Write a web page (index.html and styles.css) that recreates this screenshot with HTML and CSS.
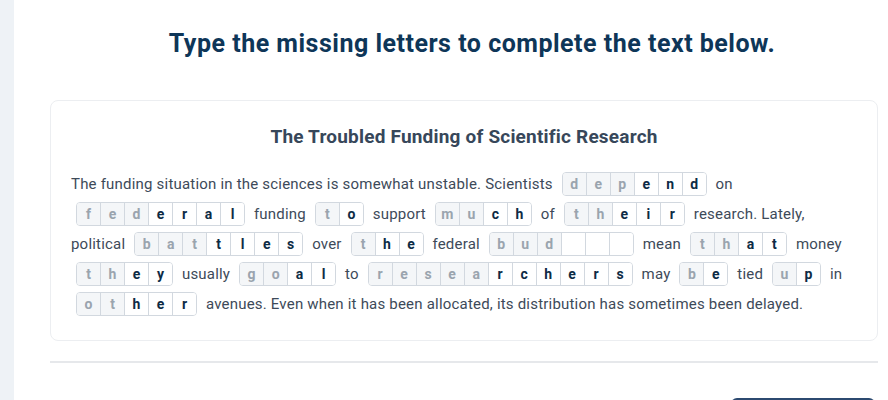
FILE: index.html
```html
<!DOCTYPE html>
<html lang="en">
<head>
    <meta charset="UTF-8">
    <title>Complete the text</title>
    <link rel="stylesheet" href="styles.css">
</head>
<body>
    <div class="layout">
        <aside class="sidebar"></aside>

        <main class="main">
            <h1 class="instructions">Type the missing letters to complete the text below.</h1>

            <section class="card">
                <h2 class="card-title">The Troubled Funding of Scientific Research</h2>
                <p class="passage" id="passage">
                    The funding situation in the sciences is somewhat unstable. Scientists
                    <span class="gap" data-given="dep" data-typed="end"></span> on
                    <span class="gap" data-given="fed" data-typed="eral"></span> funding
                    <span class="gap" data-given="t" data-typed="o"></span> support
                    <span class="gap" data-given="mu" data-typed="ch"></span> of
                    <span class="gap" data-given="th" data-typed="eir"></span> research. Lately,
                    political
                    <span class="gap" data-given="bat" data-typed="tles"></span> over
                    <span class="gap" data-given="t" data-typed="he"></span> federal
                    <span class="gap" data-given="bud" data-typed="   "></span> mean
                    <span class="gap" data-given="th" data-typed="at"></span> money
                    <span class="gap" data-given="th" data-typed="ey"></span> usually
                    <span class="gap" data-given="go" data-typed="al"></span> to
                    <span class="gap" data-given="resea" data-typed="rchers"></span> may
                    <span class="gap" data-given="b" data-typed="e"></span> tied
                    <span class="gap" data-given="u" data-typed="p"></span> in
                    <span class="gap" data-given="ot" data-typed="her"></span> avenues. Even when it has been allocated, its distribution has sometimes been delayed.
                </p>
            </section>

            <hr class="divider">

            <div class="actions">
                <button class="next-button">Next</button>
            </div>
        </main>
    </div>

    <script>
        // monta as células de cada lacuna
        document.querySelectorAll('.gap').forEach(function(gap) {
            const given = gap.dataset.given;
            const typed = gap.dataset.typed;

            for (const ch of given) {
                const cell = document.createElement('span');
                cell.className = 'cell given';
                cell.textContent = ch;
                gap.appendChild(cell);
            }
            for (const ch of typed) {
                const cell = document.createElement('span');
                cell.className = 'cell';
                cell.textContent = ch.trim();
                gap.appendChild(cell);
            }
        });
    </script>
</body>
</html>
```

FILE: styles.css
```css
:root {
    --sidebar-color: #eef2f6;
    --heading-color: #0e3658;
    --title-color: #37475a;
    --text-color: #3d4a59;
    --border-color: #d2d8df;
    --card-border: #eceef1;
    --given-background: #f4f6f8;
    --given-color: #9aa4ae;
    --typed-color: #0d2b45;
    --button-background: #2c4a70;
}

body {
    margin: 0;
    font-family: Roboto, "Liberation Sans", sans-serif;
    background-color: #fff;
    color: var(--text-color);
}

.layout {
    display: flex;
    min-height: 400px;
}

.sidebar {
    width: 14px;
    flex-shrink: 0;
    background-color: var(--sidebar-color);
}

.main {
    flex: 1;
    padding: 0 10px 0 36px;
}

.instructions {
    margin: 28px 0 40px;
    padding-left: 16px;
    text-align: center;
    font-size: 25px;
    line-height: 32px;
    letter-spacing: 0.5px;
    font-weight: 700;
    color: var(--heading-color);
}

.card {
    border: 1px solid var(--card-border);
    border-radius: 8px;
    padding: 24px 20px 21px;
}

.card-title {
    margin: 0 0 20px;
    text-align: center;
    font-size: 19px;
    line-height: 24px;
    letter-spacing: 0.2px;
    font-weight: 700;
    color: var(--title-color);
}

.passage {
    margin: 0;
    padding-right: 6px;
    font-size: 15px;
    line-height: 30px;
    letter-spacing: 0.2px;
}

.gap {
    display: inline-flex;
    vertical-align: middle;
    margin: 0 5px;
    border: 1px solid var(--border-color);
    border-radius: 4px;
    overflow: hidden;
    position: relative;
    top: -1px;
}

.cell {
    width: 23px;
    height: 22px;
    display: flex;
    align-items: center;
    justify-content: center;
    font-size: 14px;
    line-height: 16px;
    font-weight: 700;
    letter-spacing: 0;
    color: var(--typed-color);
    background-color: #fff;
    border-right: 1px solid var(--border-color);
}

.cell:last-child {
    border-right: none;
}

.cell.given {
    background-color: var(--given-background);
    color: var(--given-color);
}

.divider {
    margin: 20px 0 0;
    border: none;
    border-top: 2px solid #e6e8eb;
}

.actions {
    display: flex;
    justify-content: flex-end;
    padding: 35px 3px 0 0;
}

.next-button {
    width: 144px;
    height: 40px;
    border: none;
    border-radius: 6px;
    background-color: var(--button-background);
    color: #fff;
    font-size: 16px;
    font-weight: 700;
}
```
